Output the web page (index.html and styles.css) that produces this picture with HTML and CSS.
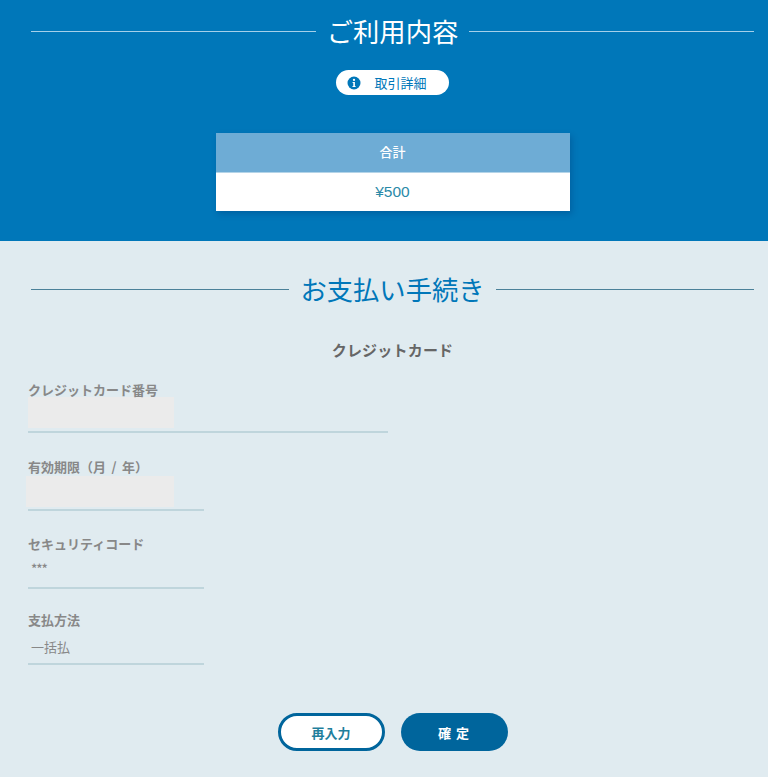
FILE: index.html
```html
<!DOCTYPE html>
<html lang="ja">
<head>
<meta charset="utf-8">
<title>ご利用内容</title>
<link rel="stylesheet" href="styles.css">
</head>
<body>
<section class="usage">
  <h2 class="heading heading-light"><span>ご利用内容</span></h2>
  <div class="detail-wrap">
    <a class="detail-btn">
      <svg class="info" viewBox="0 0 14 14" width="14" height="14" aria-hidden="true">
        <circle cx="7" cy="7" r="6.5" fill="#0077b9"/>
        <circle cx="7" cy="3.9" r="1.15" fill="#fff"/>
        <path d="M5.6 6h2.3v4h.7v1H5.5v-1h.8V7h-.7z" fill="#fff"/>
      </svg>
      <span>取引詳細</span>
    </a>
  </div>
  <div class="total">
    <div class="total-head">合計</div>
    <div class="total-body">¥500</div>
  </div>
</section>
<section class="payment">
  <h2 class="heading heading-blue"><span>お支払い手続き</span></h2>
  <h3 class="method">クレジットカード</h3>
  <form class="form">
    <div class="field field-wide field-card">
      <label>クレジットカード番号</label>
      <div class="control"><div class="secure secure-card"></div></div>
    </div>
    <div class="field field-exp">
      <label>有効期限（月 / 年）</label>
      <div class="control"><div class="secure secure-exp"></div></div>
    </div>
    <div class="field field-cvc">
      <label>セキュリティコード</label>
      <div class="control value value-dots">***</div>
    </div>
    <div class="field field-pay">
      <label>支払方法</label>
      <div class="control value">一括払</div>
    </div>
  </form>
  <div class="actions">
    <button class="btn btn-outline" type="button">再入力</button>
    <button class="btn btn-solid" type="button">確 定</button>
  </div>
</section>
</body>
</html>
```
FILE: styles.css
```css
* { box-sizing: border-box; }
html, body { margin: 0; padding: 0; }
body {
  width: 768px;
  height: 777px;
  overflow: hidden;
  font-family: "Noto Sans CJK JP", "Noto Sans", sans-serif;
  background: #e0ebf0;
}
.usage {
  height: 241px;
  padding: 13px 14px 0 31px;
  background: #0077b9;
}
.heading {
  display: flex;
  align-items: center;
  gap: 11px;
  margin: 0;
  height: 37px;
  font-size: 26.3px;
  font-weight: 400;
  line-height: 36px;
  white-space: nowrap;
}
.heading span { padding-bottom: 2px; }
.heading::before,
.heading::after {
  content: "";
  flex: 1;
  height: 1px;
}
.heading-light { color: #fff; }
.heading-light::before,
.heading-light::after { background: #a5d0ea; }
.heading-blue { color: #0077b9; }
.heading-blue::before,
.heading-blue::after { background: #4b8199; }
.detail-wrap {
  display: flex;
  justify-content: center;
  margin-top: 20px;
}
.detail-btn {
  display: flex;
  align-items: center;
  width: 113px;
  height: 25px;
  padding-left: 11px;
  border-radius: 13px;
  background: #fff;
  color: #0077b9;
  font-size: 13px;
}
.detail-btn span { margin-left: 13.5px; }
.total {
  width: 354px;
  margin: 38px auto 0;
  text-align: center;
  box-shadow: 2px 3px 6px rgba(0, 50, 110, 0.3);
}
.total-head {
  height: 40px;
  line-height: 38px;
  background: #6eacd5;
  border-bottom: 1px solid #b4d4e8;
  color: #fff;
  font-size: 13px;
  font-weight: 500;
}
.total-body {
  height: 38px;
  line-height: 37px;
  background: #fff;
  color: #2a8aa8;
  font-family: "Liberation Sans", sans-serif;
  font-size: 15.5px;
}
.payment { padding: 30px 14px 0 31px; }
.method {
  margin: 31px 0 0;
  height: 22px;
  line-height: 22px;
  text-align: center;
  font-size: 15px;
  font-weight: 700;
  letter-spacing: 0.2px;
  color: #666;
}
.form { margin: 21px 0 0 -3px; }
.field label {
  display: block;
  height: 16px;
  line-height: 16px;
  font-size: 13px;
  font-weight: 700;
  color: #888;
  word-spacing: 2.5px;
}
.control {
  width: 176px;
  border-bottom: 2px solid #bfd5dc;
}
.field-wide .control { width: 360px; }
.field-card .control { height: 36px; }
.field-exp { margin-top: 26px; }
.field-exp .control { height: 35px; }
.field-cvc { margin-top: 25px; }
.field-pay { margin-top: 23px; }
.secure {
  background: #ebebeb;
  height: 31px;
}
.secure-card { width: 146px; margin-top: -1px; }
.secure-exp { width: 148px; margin: 1px 0 0 -2px; }
.value {
  height: 37px;
  padding-left: 3px;
  line-height: 38px;
  font-size: 13px;
  color: #888;
}
.value-dots {
  line-height: 34px;
  letter-spacing: -1px;
  font-weight: 500;
}
.actions {
  display: flex;
  justify-content: center;
  gap: 16px;
  margin-top: 48px;
}
.btn {
  width: 107px;
  height: 38px;
  border-radius: 19px;
  font-family: inherit;
  font-size: 13px;
  font-weight: 700;
  padding: 0;
}
.btn-outline {
  background: #fff;
  border: 3px solid #00659c;
  color: #1f7f9c;
}
.btn-solid {
  background: #00659c;
  border: 0;
  color: #fff;
  letter-spacing: 1px;
}
```
